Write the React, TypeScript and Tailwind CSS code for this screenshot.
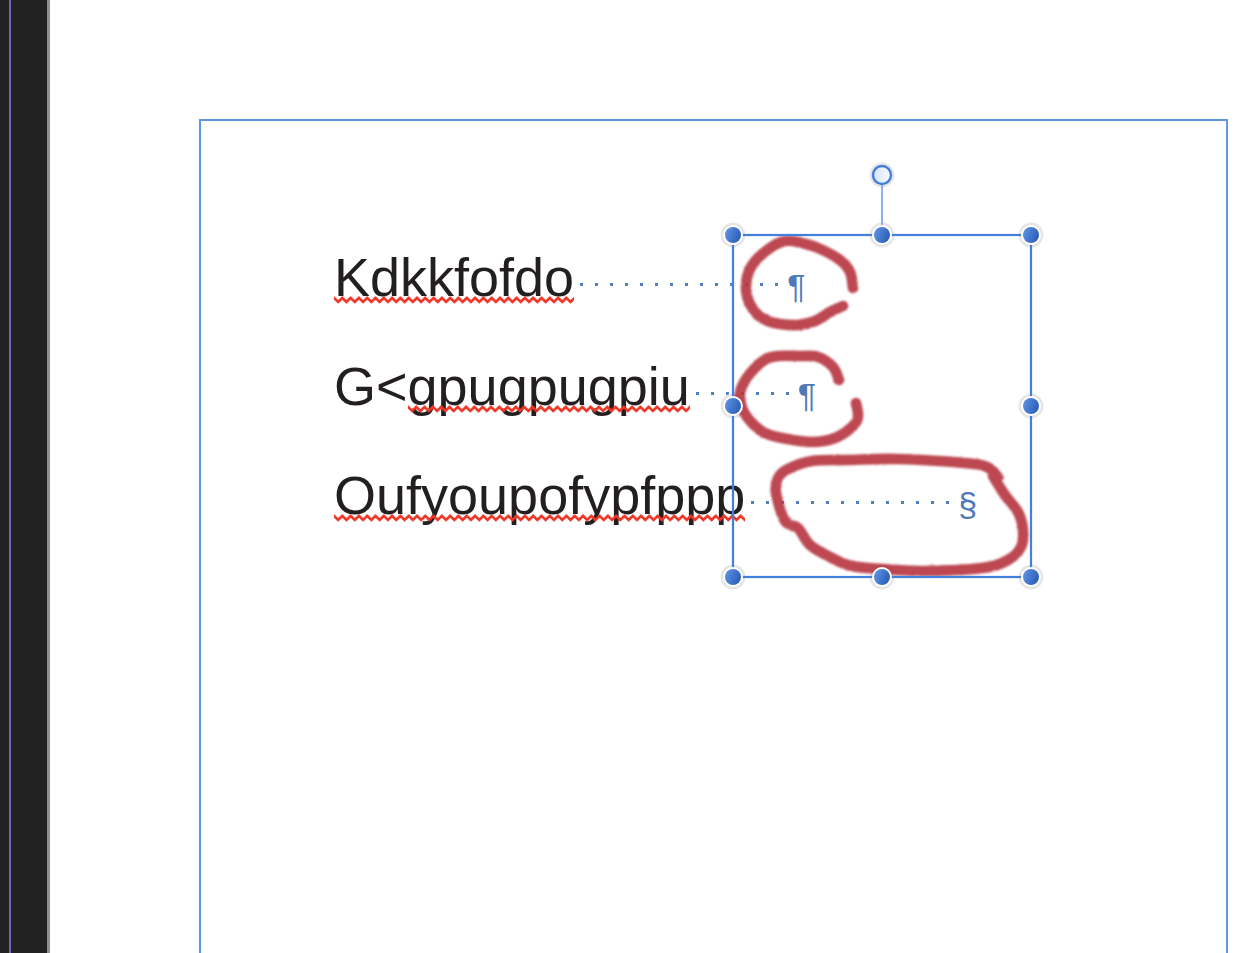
import React from 'react';

type Point = [number, number];

interface TextLine {
  plain?: string;
  misspelled: string;
  spaces: number;
  mark: string;
}

const LINES: TextLine[] = [
  { misspelled: 'Kdkkfofdo', spaces: 15, mark: '¶' },
  { plain: 'G<', misspelled: 'gpugpugpiu', spaces: 8, mark: '¶' },
  { misspelled: 'Oufyoupofypfppp', spaces: 15, mark: '§' },
];

// Freehand brush strokes, in document coordinates
const STROKES: Point[][] = [
  [
    [853, 288], [850, 272], [840, 260], [818, 248], [798, 242], [785, 241], [773, 246], [758, 258],
    [749, 271], [746, 287], [749, 302], [758, 315], [768, 321], [780, 324], [798, 325], [815, 321],
    [832, 311], [843, 306],
  ],
  [
    [839, 380], [833, 367], [818, 357], [798, 356], [778, 356], [766, 359], [755, 368], [746, 379],
    [740, 393], [743, 410], [753, 424], [765, 433], [782, 438], [812, 442], [835, 438], [852, 427],
    [858, 417], [856, 403],
  ],
  [
    [998, 477], [987, 467], [965, 463], [898, 459], [848, 460], [812, 461], [788, 469], [778, 478],
    [776, 493], [785, 521], [798, 528], [810, 545], [832, 558], [852, 566], [882, 569], [922, 571],
    [982, 568], [1008, 560], [1021, 547], [1023, 530], [1018, 512], [1005, 495], [993, 476],
  ],
];

const HANDLES: Point[] = [
  [733, 235], [882, 235], [1031, 235],
  [733, 406], [1031, 406],
  [733, 577], [882, 577], [1031, 577],
];

// Catmull-Rom spline through all points
const smoothPath = (points: Point[]) => {
  let d = `M${points[0][0]} ${points[0][1]}`;
  for (let i = 0; i < points.length - 1; i++) {
    const p0 = points[i - 1] || points[i];
    const p1 = points[i];
    const p2 = points[i + 1];
    const p3 = points[i + 2] || p2;
    const c1 = [p1[0] + (p2[0] - p0[0]) / 6, p1[1] + (p2[1] - p0[1]) / 6];
    const c2 = [p2[0] - (p3[0] - p1[0]) / 6, p2[1] - (p3[1] - p1[1]) / 6];
    d += `C${c1[0]} ${c1[1]} ${c2[0]} ${c2[1]} ${p2[0]} ${p2[1]}`;
  }
  return d;
};

const Squiggle: React.FC<{ id: string }> = ({ id }) => (
  <svg className="absolute left-0 bottom-7 w-full h-2" aria-hidden="true">
    <defs>
      <pattern id={id} width="8.3" height="8" patternUnits="userSpaceOnUse">
        <path
          d="M-4.15 5.9L0 1.9L4.15 5.9L8.3 1.9L12.45 5.9"
          fill="none"
          stroke="#ee3524"
          strokeWidth="2.6"
        />
      </pattern>
    </defs>
    <rect width="100%" height="8" fill={`url(#${id})`} />
  </svg>
);

const DocumentLine: React.FC<{ line: TextLine; index: number }> = ({ line, index }) => (
  <p className="flex items-start whitespace-nowrap text-[54px] leading-[109px] text-[#231f20]">
    {line.plain && <span>{line.plain}</span>}
    <span className="relative">
      {line.misspelled}
      <Squiggle id={`squiggle-${index}`} />
    </span>
    {/* Space markers */}
    <span className="flex mt-15" aria-hidden="true">
      {Array.from({ length: line.spaces }, (_, i) => (
        <span key={i} className="flex justify-center w-[15px]">
          <span className="w-[3px] h-[3px] bg-[#5580c0]" />
        </span>
      ))}
    </span>
    <span className="-ml-3 mt-[46px] text-[34px] leading-none text-[#5079b8]">{line.mark}</span>
  </p>
);

const SelectionLayer: React.FC = () => (
  <svg
    className="absolute left-[499px] top-[29px] w-[360px] h-[450px]"
    viewBox="700 150 360 450"
    aria-hidden="true"
  >
    <defs>
      <linearGradient id="knob" x1="0" y1="0.3" x2="1" y2="0.7">
        <stop offset="0" stopColor="#5b91e2" />
        <stop offset="1" stopColor="#2a5bb4" />
      </linearGradient>
      <linearGradient id="rotate-knob" x1="0" y1="0" x2="1" y2="0">
        <stop offset="0" stopColor="#d6e5fa" />
        <stop offset="1" stopColor="#f7faff" />
      </linearGradient>
      <filter id="brush" x="-5%" y="-5%" width="110%" height="110%">
        <feTurbulence type="fractalNoise" baseFrequency="0.3" numOctaves="2" seed="4" />
        <feDisplacementMap in="SourceGraphic" scale="2" xChannelSelector="R" yChannelSelector="G" />
        <feGaussianBlur stdDeviation="0.8" />
      </filter>
    </defs>

    {/* Handle halos sit under the artwork */}
    {[...HANDLES, [882, 175] as Point].map(([x, y]) => (
      <circle key={`${x}-${y}`} cx={x} cy={y} r="12.4" fill="#e6e6e6" />
    ))}

    <g filter="url(#brush)" opacity="0.9">
      {STROKES.map((points, i) => (
        <path
          key={i}
          d={smoothPath(points)}
          fill="none"
          stroke="#b6363f"
          strokeWidth="10.6"
          strokeLinecap="round"
          strokeLinejoin="round"
        />
      ))}
    </g>

    <rect x="733" y="235" width="298" height="342" fill="none" stroke="#427fdf" strokeWidth="2.2" />
    <path d="M882 184V226" stroke="#8fb0ea" strokeWidth="2" />

    {HANDLES.map(([x, y]) => (
      <g key={`${x}-${y}`}>
        <circle cx={x} cy={y} r="10" fill="#fff" />
        <circle cx={x} cy={y} r="8" fill="url(#knob)" />
      </g>
    ))}
    <circle cx="882" cy="175" r="9" fill="url(#rotate-knob)" stroke="#427fdf" strokeWidth="2.4" />
  </svg>
);

export default function App() {
  return (
    <div className="flex min-h-screen bg-white font-['Liberation_Sans',Arial,sans-serif]">
      {/* Pasteboard with guide */}
      <aside className="flex w-[50px] shrink-0 bg-[#222222] border-r-[3px] border-[#8e8e8e]">
        <div className="ml-[9px] w-[2px] bg-[#6c6bb8]" />
      </aside>

      <main className="flex flex-1 min-w-0 pt-[119px] pl-[149px] pr-[26px]">
        <div className="relative flex-1 min-w-0 border-2 border-b-0 border-[#5f98de] pt-[102px] pl-[133px]">
          {LINES.map((line, index) => (
            <DocumentLine key={index} line={line} index={index} />
          ))}
          <SelectionLayer />
        </div>
      </main>
    </div>
  );
}
